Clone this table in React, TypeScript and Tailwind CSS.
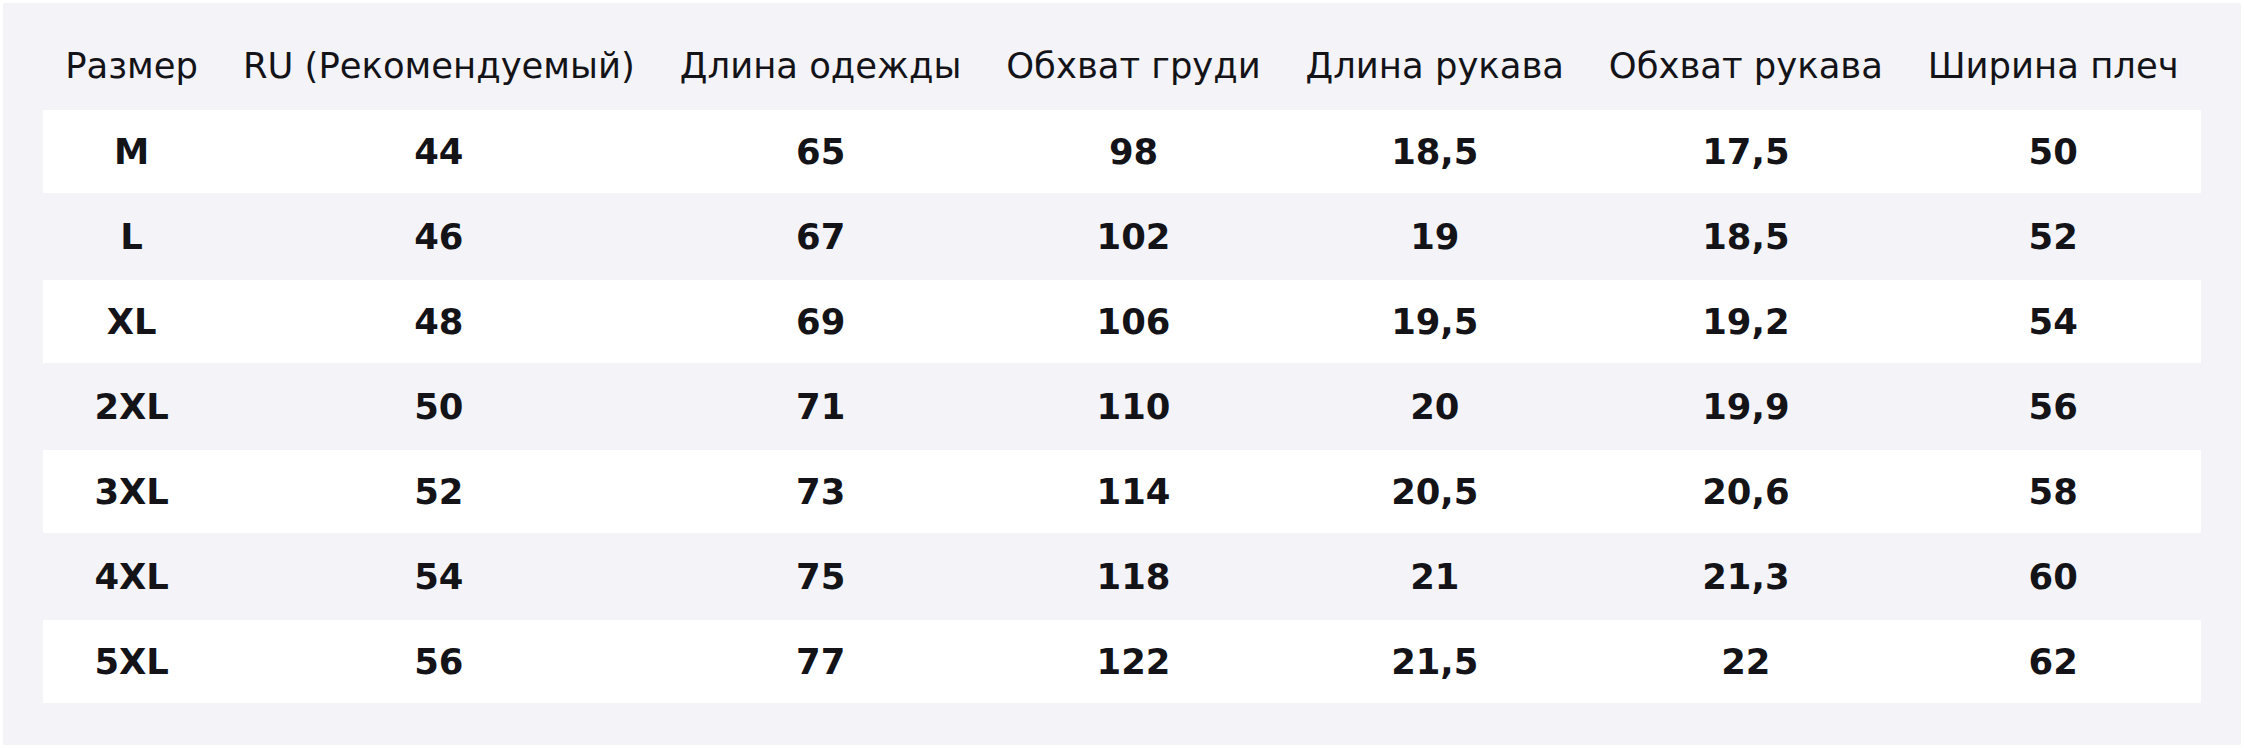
const headers = [
  'Размер',
  'RU (Рекомендуемый)',
  'Длина одежды',
  'Обхват груди',
  'Длина рукава',
  'Обхват рукава',
  'Ширина плеч',
];

const rows = [
  ['M', '44', '65', '98', '18,5', '17,5', '50'],
  ['L', '46', '67', '102', '19', '18,5', '52'],
  ['XL', '48', '69', '106', '19,5', '19,2', '54'],
  ['2XL', '50', '71', '110', '20', '19,9', '56'],
  ['3XL', '52', '73', '114', '20,5', '20,6', '58'],
  ['4XL', '54', '75', '118', '21', '21,3', '60'],
  ['5XL', '56', '77', '122', '21,5', '22', '62'],
];

export default function App() {
  return (
    <div className="min-h-screen bg-white p-[3px]">
      <div className="bg-[#f3f3f8] p-10 font-['DejaVu_Sans',sans-serif] text-[35.4px] text-[#131318]">
        <table className="w-full border-separate border-spacing-x-0 border-spacing-y-[2px]">
          <thead>
            <tr>
              {headers.map((h) => (
                <th key={h} className="px-[22px] pt-0 pb-[21px] font-normal whitespace-nowrap leading-[42px]">
                  {h}
                </th>
              ))}
            </tr>
          </thead>
          <tbody>
            {rows.map((row, i) => (
              <tr key={row[0]} className={i % 2 === 0 ? 'bg-white' : 'bg-transparent'}>
                {row.map((cell, j) => (
                  <td key={j} className="h-[83px] px-[22px] py-0 text-center font-bold leading-[42px] align-middle">
                    {cell}
                  </td>
                ))}
              </tr>
            ))}
          </tbody>
        </table>
      </div>
    </div>
  );
}
